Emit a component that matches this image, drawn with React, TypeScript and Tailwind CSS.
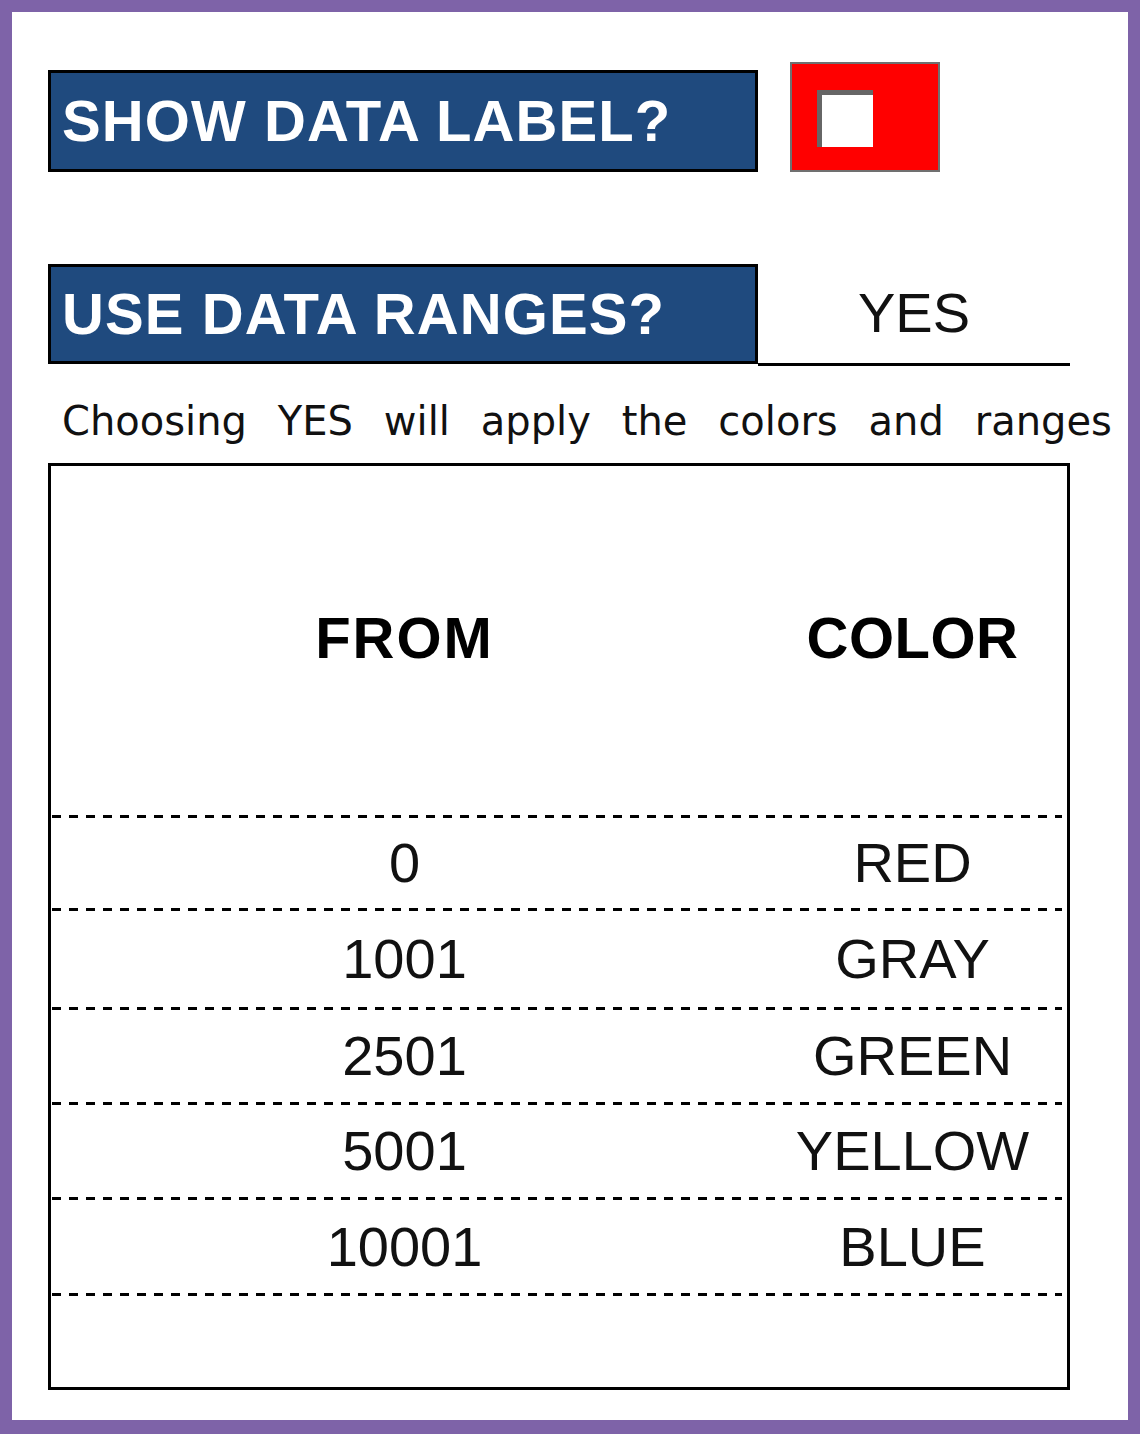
const ROWS = [
  { from: '0', color: 'RED', h: 90 },
  { from: '1001', color: 'GRAY', h: 96 },
  { from: '2501', color: 'GREEN', h: 92 },
  { from: '5001', color: 'YELLOW', h: 92 },
  { from: '10001', color: 'BLUE', h: 93 },
]

function Dashes() {
  return (
    <div className="ml-[1px] mr-[5px] h-[3px] bg-[repeating-linear-gradient(90deg,#000_0_9px,transparent_9px_17px)]" />
  )
}

function HeaderBar({ label }: { label: string }) {
  return (
    <div className="flex items-center w-[710px] border-[3px] border-black bg-[#1f4a7e] pl-[11px] font-['Liberation_Sans',Arial,sans-serif] font-bold text-[58px] text-white leading-none tracking-[1.1px]">
      {label}
    </div>
  )
}

export default function App() {
  return (
    <div className="w-[1140px] h-[1434px] bg-[#7e63a8] pt-[12px] px-[12px] pb-[14px]">
      <div className="w-full h-full bg-white pl-[36px] pt-[50px] font-['Liberation_Sans',Arial,sans-serif] text-[#111]">
        {/* show data label */}
        <div className="flex items-end">
          <div className="flex h-[102px]">
            <HeaderBar label="SHOW DATA LABEL?" />
          </div>
          <div className="ml-[32px] w-[150px] h-[110px] bg-[#ff0000] border-2 border-[#707070] pl-[25px] pt-[26px]">
            <div className="w-[56px] h-[57px] bg-white border-t-[5px] border-l-[5px] border-[#666]" />
          </div>
        </div>

        {/* use data ranges */}
        <div className="flex mt-[92px] h-[100px]">
          <HeaderBar label="USE DATA RANGES?" />
          <div className="w-[312px] h-[102px] border-b-[3px] border-black flex items-center justify-center text-[56px] leading-none pb-[2px]">
            YES
          </div>
        </div>

        <p className="mt-[33px] ml-[14px] w-[1050px] h-[48px] leading-[48px] text-[40px] font-['DejaVu_Sans',Verdana,sans-serif] text-[#111] whitespace-nowrap flex justify-between">
          {'Choosing YES will apply the colors and ranges'.split(' ').map((w) => (
            <span key={w}>{w}</span>
          ))}
        </p>

        {/* ranges table */}
        <div className="mt-[18px] w-[1022px] h-[927px] border-[3px] border-black flex flex-col">
          <div className="flex items-center h-[349px] font-bold text-[58px] leading-none text-black pb-[6px]">
            <div className="w-[707px] text-center tracking-[2px]">FROM</div>
            <div className="flex-1 text-center tracking-[0.5px]">COLOR</div>
          </div>
          <Dashes />
          {ROWS.map((r) => (
            <div key={r.from}>
              <div className="flex items-center text-[56px] leading-none" style={{ height: r.h }}>
                <div className="w-[707px] text-center">{r.from}</div>
                <div className="flex-1 text-center">{r.color}</div>
              </div>
              <Dashes />
            </div>
          ))}
        </div>
      </div>
    </div>
  )
}
